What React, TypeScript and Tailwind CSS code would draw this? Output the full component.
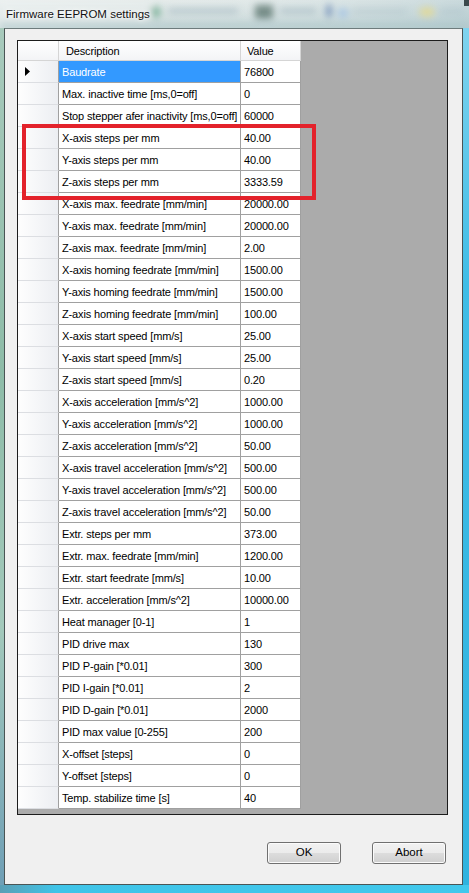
import React from "react"

type Row = { label: string; value: string }

const ROWS: Row[] = [
  { label: "Baudrate", value: "76800" },
  { label: "Max. inactive time [ms,0=off]", value: "0" },
  { label: "Stop stepper afer inactivity [ms,0=off]", value: "60000" },
  { label: "X-axis steps per mm", value: "40.00" },
  { label: "Y-axis steps per mm", value: "40.00" },
  { label: "Z-axis steps per mm", value: "3333.59" },
  { label: "X-axis max. feedrate [mm/min]", value: "20000.00" },
  { label: "Y-axis max. feedrate [mm/min]", value: "20000.00" },
  { label: "Z-axis max. feedrate [mm/min]", value: "2.00" },
  { label: "X-axis homing feedrate [mm/min]", value: "1500.00" },
  { label: "Y-axis homing feedrate [mm/min]", value: "1500.00" },
  { label: "Z-axis homing feedrate [mm/min]", value: "100.00" },
  { label: "X-axis start speed [mm/s]", value: "25.00" },
  { label: "Y-axis start speed [mm/s]", value: "25.00" },
  { label: "Z-axis start speed [mm/s]", value: "0.20" },
  { label: "X-axis acceleration [mm/s^2]", value: "1000.00" },
  { label: "Y-axis acceleration [mm/s^2]", value: "1000.00" },
  { label: "Z-axis acceleration [mm/s^2]", value: "50.00" },
  { label: "X-axis travel acceleration [mm/s^2]", value: "500.00" },
  { label: "Y-axis travel acceleration [mm/s^2]", value: "500.00" },
  { label: "Z-axis travel acceleration [mm/s^2]", value: "50.00" },
  { label: "Extr. steps per mm", value: "373.00" },
  { label: "Extr. max. feedrate [mm/min]", value: "1200.00" },
  { label: "Extr. start feedrate [mm/s]", value: "10.00" },
  { label: "Extr. acceleration [mm/s^2]", value: "10000.00" },
  { label: "Heat manager [0-1]", value: "1" },
  { label: "PID drive max", value: "130" },
  { label: "PID P-gain [*0.01]", value: "300" },
  { label: "PID I-gain [*0.01]", value: "2" },
  { label: "PID D-gain [*0.01]", value: "2000" },
  { label: "PID max value [0-255]", value: "200" },
  { label: "X-offset [steps]", value: "0" },
  { label: "Y-offset [steps]", value: "0" },
  { label: "Temp. stabilize time [s]", value: "40" },
]

// blurred aero glass behind the caption
function GlassBackdrop() {
  return (
    <svg className="absolute inset-0" width="469" height="28" viewBox="0 0 469 28">
      <defs>
        <linearGradient id="glass" x1="0" y1="0" x2="0" y2="1">
          <stop offset="0" stopColor="#e2e9e8" />
          <stop offset="1" stopColor="#c6d6d6" />
        </linearGradient>
        <linearGradient id="glassH" x1="0" y1="0" x2="1" y2="0">
          <stop offset="0" stopColor="#ffffff" stopOpacity="0.35" />
          <stop offset="0.35" stopColor="#ffffff" stopOpacity="0.1" />
          <stop offset="1" stopColor="#8fb4c0" stopOpacity="0.3" />
        </linearGradient>
        <filter id="blur" x="-50%" y="-50%" width="200%" height="200%">
          <feGaussianBlur stdDeviation="3.5" />
        </filter>
      </defs>
      <rect width="469" height="28" fill="url(#glass)" />
      <rect width="469" height="28" fill="url(#glassH)" />
      <g filter="url(#blur)" opacity="0.75">
        <ellipse cx="156" cy="12" rx="5" ry="6" fill="#6aa88c" />
        <rect x="168" y="8" width="70" height="6" fill="#9ab1ba" opacity="0.7" />
        <rect x="255" y="5" width="18" height="14" fill="#56716a" />
        <rect x="280" y="8" width="36" height="6" fill="#9ab1ba" opacity="0.7" />
        <ellipse cx="329" cy="11" rx="3" ry="7" fill="#5a7cb0" />
        <ellipse cx="343" cy="13" rx="5" ry="5" fill="#9cbfe6" />
        <rect x="352" y="9" width="55" height="5" fill="#a6bcc4" opacity="0.6" />
        <ellipse cx="427" cy="12" rx="8" ry="5" fill="#e8da88" />
        <rect x="440" y="9" width="24" height="5" fill="#a6bcc4" opacity="0.6" />
        <rect x="0" y="22" width="469" height="8" fill="#a9c4c9" opacity="0.7" />
        <rect x="0" y="0" width="150" height="22" fill="#edf2f1" opacity="0.5" />
      </g>
      <rect x="464" y="0" width="5" height="6" fill="#3b4a4c" />
    </svg>
  )
}

function Triangle() {
  return (
    <svg width="5" height="9" viewBox="0 0 5 9">
      <polygon points="0,0 5,4.5 0,9" fill="#000" />
    </svg>
  )
}

function WinButton({ label }: { label: string }) {
  return (
    <button
      type="button"
      className="h-[22px] w-[74px] rounded-[3px] border border-[#707070] bg-[linear-gradient(to_bottom,#f2f2f2_0%,#ebebeb_50%,#dddddd_50%,#cfcfcf_100%)] text-[11.5px] text-black shadow-[inset_0_0_0_1px_#fbfbfb]"
    >
      {label}
    </button>
  )
}

export default function App() {
  return (
    <div className="relative flex h-[893px] w-[469px] flex-col overflow-hidden bg-[#9fc6b6] font-['Liberation_Sans',Arial,sans-serif]">
      {/* caption */}
      <div className="relative h-[28px] shrink-0">
        <GlassBackdrop />
        <div className="relative pl-[6px] pt-[7px] text-[11.5px] leading-[14px] text-[#111] [text-shadow:0_0_6px_#ffffff,0_0_3px_#ffffff]">
          Firmware EEPROM settings
        </div>
      </div>

      <div className="flex flex-1">
        <div className="w-[4px] bg-[linear-gradient(to_bottom,#a8cabc,#8ebca8_40%,#a3c9bb_70%,#6f9fb6)]" />

        {/* client area */}
        <div className="flex w-[459px] flex-col border border-[#4a5555] border-t-[#6d7b7c] bg-[#f0f0f0] pl-[12px] pt-[11px]">
          <div className="h-[775px] w-[431px] overflow-hidden border border-[#1c1c1c] bg-[#ababab] text-[11px] tracking-[-0.15px] text-black">
            {/* column headers */}
            <div className="flex h-[20px]">
              <div className="w-[41px] border-r border-b border-[#d5d5d5] bg-[linear-gradient(to_bottom,#ffffff,#f3f4f6)]" />
              <div className="flex w-[182px] items-center border-r border-b border-[#d5d5d5] bg-[linear-gradient(to_bottom,#ffffff,#f3f4f6)] pl-[7px] pt-[2px]">
                Description
              </div>
              <div className="flex w-[60px] items-center border-r border-b border-[#d5d5d5] bg-[linear-gradient(to_bottom,#ffffff,#f3f4f6)] pl-[6px] pt-[2px]">
                Value
              </div>
            </div>

            {ROWS.map((row, i) => (
              <div key={row.label} className="flex h-[22px]">
                <div className="flex w-[41px] items-center border-r border-b border-r-[#a0a0a0] border-b-[#dcdee2] bg-[linear-gradient(to_right,#fefefe,#eceef2)] pl-[7px]">
                  {i === 0 && <Triangle />}
                </div>
                <div
                  className={
                    i === 0
                      ? "flex w-[182px] items-center border-r border-b border-[#a0a0a0] bg-[#3399ff] pl-[3px] pt-[2px] text-white"
                      : "flex w-[182px] items-center border-r border-b border-[#a0a0a0] bg-white pl-[3px] pt-[2px]"
                  }
                >
                  <span className="whitespace-nowrap">{row.label}</span>
                </div>
                <div className="flex w-[60px] items-center border-r border-b border-[#a0a0a0] bg-white pl-[3px] pt-[2px]">
                  {row.value}
                </div>
              </div>
            ))}
          </div>

          <div className="mt-[27px] flex justify-end gap-[31px] pr-[16px]">
            <WinButton label="OK" />
            <WinButton label="Abort" />
          </div>
        </div>

        <div className="w-[6px] bg-[linear-gradient(to_bottom,#7fd3ee,#3fbde6_30%,#2fb3df)]" />
      </div>

      <div className="h-[8px] shrink-0 bg-[linear-gradient(to_right,#5a9fb5,#3fc4e8_12%,#41c8ec)]" />

      {/* red highlight frame */}
      <div className="pointer-events-none absolute left-[22px] top-[124px] h-[76px] w-[294px] border-4 border-[#e3222b]" />
    </div>
  )
}
